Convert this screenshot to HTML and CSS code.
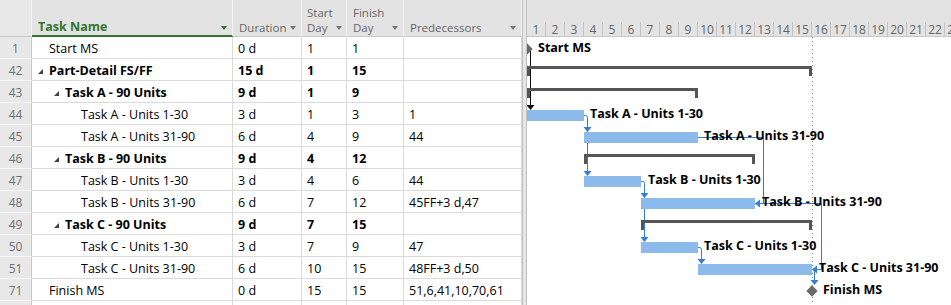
FILE: index.html
```html
<!DOCTYPE html>
<html lang="en">
<head>
    <meta charset="UTF-8">
    <title>Gantt Chart</title>
    <link rel="stylesheet" href="styles.css">
</head>
<body>
    <div class="app">
        <!-- Task sheet -->
        <div class="sheet">
            <div class="sheet-head">
                <div class="head-cell corner"></div>
                <div class="head-cell name-head"><span>Task Name</span><i class="drop green"></i></div>
                <div class="head-cell"><span>Duration</span><i class="drop"></i></div>
                <div class="head-cell narrow"><span>Start<br>Day</span><i class="drop"></i></div>
                <div class="head-cell"><span>Finish<br>Day</span><i class="drop"></i></div>
                <div class="head-cell"><span>Predecessors</span><i class="drop"></i></div>
            </div>

            <div class="sheet-row">
                <div class="num">1</div><div class="cell lvl1">Start MS</div><div class="cell">0 d</div><div class="cell">1</div><div class="cell">1</div><div class="cell"></div>
            </div>
            <div class="sheet-row bold">
                <div class="num">42</div><div class="cell lvl1"><i class="toggle"></i>Part-Detail FS/FF</div><div class="cell">15 d</div><div class="cell">1</div><div class="cell">15</div><div class="cell"></div>
            </div>
            <div class="sheet-row bold">
                <div class="num">43</div><div class="cell lvl2"><i class="toggle"></i>Task A - 90 Units</div><div class="cell">9 d</div><div class="cell">1</div><div class="cell">9</div><div class="cell"></div>
            </div>
            <div class="sheet-row">
                <div class="num">44</div><div class="cell lvl3">Task A - Units 1-30</div><div class="cell">3 d</div><div class="cell">1</div><div class="cell">3</div><div class="cell">1</div>
            </div>
            <div class="sheet-row">
                <div class="num">45</div><div class="cell lvl3">Task A - Units 31-90</div><div class="cell">6 d</div><div class="cell">4</div><div class="cell">9</div><div class="cell">44</div>
            </div>
            <div class="sheet-row bold">
                <div class="num">46</div><div class="cell lvl2"><i class="toggle"></i>Task B - 90 Units</div><div class="cell">9 d</div><div class="cell">4</div><div class="cell">12</div><div class="cell"></div>
            </div>
            <div class="sheet-row">
                <div class="num">47</div><div class="cell lvl3">Task B - Units 1-30</div><div class="cell">3 d</div><div class="cell">4</div><div class="cell">6</div><div class="cell">44</div>
            </div>
            <div class="sheet-row">
                <div class="num">48</div><div class="cell lvl3">Task B - Units 31-90</div><div class="cell">6 d</div><div class="cell">7</div><div class="cell">12</div><div class="cell">45FF+3 d,47</div>
            </div>
            <div class="sheet-row bold">
                <div class="num">49</div><div class="cell lvl2"><i class="toggle"></i>Task C - 90 Units</div><div class="cell">9 d</div><div class="cell">7</div><div class="cell">15</div><div class="cell"></div>
            </div>
            <div class="sheet-row">
                <div class="num">50</div><div class="cell lvl3">Task C - Units 1-30</div><div class="cell">3 d</div><div class="cell">7</div><div class="cell">9</div><div class="cell">47</div>
            </div>
            <div class="sheet-row">
                <div class="num">51</div><div class="cell lvl3">Task C - Units 31-90</div><div class="cell">6 d</div><div class="cell">10</div><div class="cell">15</div><div class="cell">48FF+3 d,50</div>
            </div>
            <div class="sheet-row">
                <div class="num">71</div><div class="cell lvl1">Finish MS</div><div class="cell">0 d</div><div class="cell">15</div><div class="cell">15</div><div class="cell">51,6,41,10,70,61</div>
            </div>
            <div class="sheet-row">
                <div class="num"></div><div class="cell"></div><div class="cell"></div><div class="cell"></div><div class="cell"></div><div class="cell"></div>
            </div>
        </div>

        <div class="splitter"></div>

        <!-- Gantt chart -->
        <div class="gantt">
            <div class="gantt-head">
                <div class="day">1</div><div class="day">2</div><div class="day">3</div><div class="day">4</div>
                <div class="day">5</div><div class="day">6</div><div class="day">7</div><div class="day">8</div>
                <div class="day">9</div><div class="day">10</div><div class="day">11</div><div class="day">12</div>
                <div class="day">13</div><div class="day">14</div><div class="day">15</div><div class="day">16</div>
                <div class="day">17</div><div class="day">18</div><div class="day">19</div><div class="day">20</div>
                <div class="day">21</div><div class="day">22</div><div class="day">23</div>
            </div>

            <div class="gantt-body">
                <svg class="links" width="424" height="268" viewBox="0 0 424 268">
                    <line class="finish-line" x1="285.5" y1="0" x2="285.5" y2="268"/>
                    <!-- Start MS -> Task A 1-30 -->
                    <path class="link black" d="M3.5 12 V68"/>
                    <polygon class="head black" points="-0.5,68 7.5,68 3.5,73"/>
                    <!-- 44 -> 45, 47 -->
                    <path class="link" d="M57 78.5 H58.5 Q60.5 78.5 60.5 80.5 V134"/>
                    <polygon class="head" points="56.5,90 64.5,90 60.5,95"/>
                    <polygon class="head" points="56.5,134 64.5,134 60.5,139"/>
                    <!-- 47 -> 48, 50 -->
                    <path class="link" d="M114 144.5 H115.5 Q117.5 144.5 117.5 146.5 V200"/>
                    <polygon class="head" points="113.5,156 121.5,156 117.5,161"/>
                    <polygon class="head" points="113.5,200 121.5,200 117.5,205"/>
                    <!-- 45 FF+3d -> 48 -->
                    <path class="link" d="M171 100.5 H236.5 V166.5 H233"/>
                    <polygon class="head" points="233,162.5 233,170.5 228,166.5"/>
                    <!-- 48 FF+3d -> 51 -->
                    <path class="link" d="M228 166.5 H294.5 V232.5 H290"/>
                    <polygon class="head" points="290,228.5 290,236.5 285,232.5"/>
                    <!-- 50 -> 51 -->
                    <path class="link" d="M171 210.5 H172.5 Q174.5 210.5 174.5 212.5 V222"/>
                    <polygon class="head" points="170.5,222 178.5,222 174.5,227"/>
                    <!-- 51 -> Finish MS -->
                    <path class="link" d="M285 232.5 H285.5 Q287.5 232.5 287.5 234.5 V243"/>
                    <polygon class="head" points="283.5,243 291.5,243 287.5,248"/>
                </svg>

                <div class="g-row">
                    <div class="milestone" style="left: 0px"></div>
                    <div class="label" style="left: 11px">Start MS</div>
                </div>
                <div class="g-row">
                    <div class="summary" style="left: 0px; width: 285px"></div>
                </div>
                <div class="g-row">
                    <div class="summary" style="left: 0px; width: 171px"></div>
                </div>
                <div class="g-row">
                    <div class="bar" style="left: 0px; width: 57px"></div>
                    <div class="label" style="left: 63px">Task A - Units 1-30</div>
                </div>
                <div class="g-row">
                    <div class="bar" style="left: 57px; width: 114px"></div>
                    <div class="label" style="left: 177px">Task A - Units 31-90</div>
                </div>
                <div class="g-row">
                    <div class="summary" style="left: 57px; width: 171px"></div>
                </div>
                <div class="g-row">
                    <div class="bar" style="left: 57px; width: 57px"></div>
                    <div class="label" style="left: 121px">Task B - Units 1-30</div>
                </div>
                <div class="g-row">
                    <div class="bar" style="left: 114px; width: 114px"></div>
                    <div class="label" style="left: 235px">Task B - Units 31-90</div>
                </div>
                <div class="g-row">
                    <div class="summary" style="left: 114px; width: 171px"></div>
                </div>
                <div class="g-row">
                    <div class="bar" style="left: 114px; width: 57px"></div>
                    <div class="label" style="left: 177px">Task C - Units 1-30</div>
                </div>
                <div class="g-row">
                    <div class="bar" style="left: 171px; width: 114px"></div>
                    <div class="label" style="left: 292px">Task C - Units 31-90</div>
                </div>
                <div class="g-row">
                    <div class="milestone" style="left: 285px"></div>
                    <div class="label" style="left: 296px">Finish MS</div>
                </div>
            </div>
        </div>
    </div>
</body>
</html>
```

FILE: styles.css
```css
body {
    margin: 0;
    font-family: "Open Sans", "Noto Sans", sans-serif;
    font-size: 12.5px;
    color: #000000;
    background-color: #ffffff;
    overflow: hidden;
}
.app {
    display: flex;
    height: 305px;
    overflow: hidden;
}

/* Task sheet */
.sheet {
    width: 522px;
    flex: none;
    overflow: hidden;
}
.sheet-head,
.sheet-row {
    display: grid;
    grid-template-columns: 32px 201px 69px 45px 57px 118px;
}
.sheet-head {
    height: 37px;
    background-color: #e3e3e3;
}
.head-cell {
    display: flex;
    align-items: flex-end;
    justify-content: space-between;
    padding: 0 5px 1px 6px;
    border-right: 1px solid #f4f4f4;
    border-bottom: 1px solid #c8c8c8;
    color: #666666;
    font-size: 11.5px;
    line-height: 15px;
    box-sizing: border-box;
}
.head-cell.narrow {
    padding-left: 5px;
    padding-right: 4px;
}
.head-cell span {
    min-width: 0;
    overflow: hidden;
    white-space: nowrap;
}
.head-cell.corner {
    background-color: #e8e8e8;
}
.name-head {
    color: #31752f;
    font-size: 12.5px;
    font-weight: bold;
    border-bottom: 2px solid #31752f;
}
.drop {
    flex: none;
    width: 0;
    height: 0;
    margin-left: 2px;
    margin-bottom: 5px;
    border-left: 3.5px solid transparent;
    border-right: 3.5px solid transparent;
    border-top: 4px solid #777777;
}
.drop.green {
    border-top-color: #31752f;
    margin-bottom: 4px;
}
.sheet-row {
    height: 22px;
}
.sheet-row.bold .cell {
    font-weight: bold;
}
.num {
    padding-top: 3px;
    background-color: #e8e8e8;
    color: #707070;
    text-align: center;
    font-size: 12px;
    line-height: 18px;
    border-right: 1px solid #c8c8c8;
    border-bottom: 1px solid #f6f6f6;
    box-sizing: border-box;
}
.cell {
    padding-left: 5px;
    padding-top: 3px;
    line-height: 18px;
    white-space: nowrap;
    overflow: hidden;
    border-right: 1px solid #dadada;
    border-bottom: 1px solid #dadada;
    box-sizing: border-box;
}
.cell.lvl1 { padding-left: 17px; }
.cell.lvl2 { padding-left: 33px; }
.cell.lvl3 { padding-left: 49px; }
.toggle {
    display: inline-block;
    width: 0;
    height: 0;
    margin-left: -11px;
    margin-right: 6px;
    vertical-align: 1px;
    border-left: 5px solid transparent;
    border-bottom: 5px solid #404040;
}

.splitter {
    width: 3px;
    flex: none;
    background-color: #e6e6e6;
    border-left: 1px solid #c0c0c0;
    border-right: 1px solid #c0c0c0;
}

/* Gantt chart */
.gantt {
    flex: 1;
    overflow: hidden;
}
.gantt-head {
    display: flex;
    align-items: flex-end;
    height: 37px;
    background-color: #e3e3e3;
    border-bottom: 1px solid #c8c8c8;
    box-sizing: border-box;
}
.day {
    flex: none;
    width: 19px;
    height: 14px;
    border-right: 1px solid #c4c4c4;
    box-sizing: border-box;
    text-align: center;
    font-size: 12px;
    line-height: 15px;
    color: #666666;
}
.gantt-body {
    position: relative;
}
.links {
    position: absolute;
    left: 0;
    top: 0;
}
.link {
    fill: none;
    stroke: #2f7ed8;
    stroke-width: 1;
}
.link.black {
    stroke: #111111;
}
.head {
    fill: #2f7ed8;
}
.head.black {
    fill: #111111;
}
.finish-line {
    stroke: #808080;
    stroke-width: 1;
    stroke-dasharray: 1 3;
}
.g-row {
    position: relative;
    height: 22px;
}
.bar {
    position: absolute;
    top: 7px;
    height: 11px;
    background-color: #8cbbeb;
}
.summary {
    position: absolute;
    top: 7px;
    height: 7px;
    border-top: 3px solid #555555;
}
.summary::before,
.summary::after {
    content: "";
    position: absolute;
    top: -3px;
    width: 3px;
    height: 10px;
    background-color: #555555;
}
.summary::before {
    left: 0;
}
.summary::after {
    right: 0;
}
.milestone {
    position: absolute;
    top: 8px;
    width: 8px;
    height: 8px;
    margin-left: -4px;
    background-color: #6a6a6a;
    transform: rotate(45deg);
}
.label {
    position: absolute;
    top: 1px;
    line-height: 20px;
    font-weight: bold;
    white-space: nowrap;
}
```
